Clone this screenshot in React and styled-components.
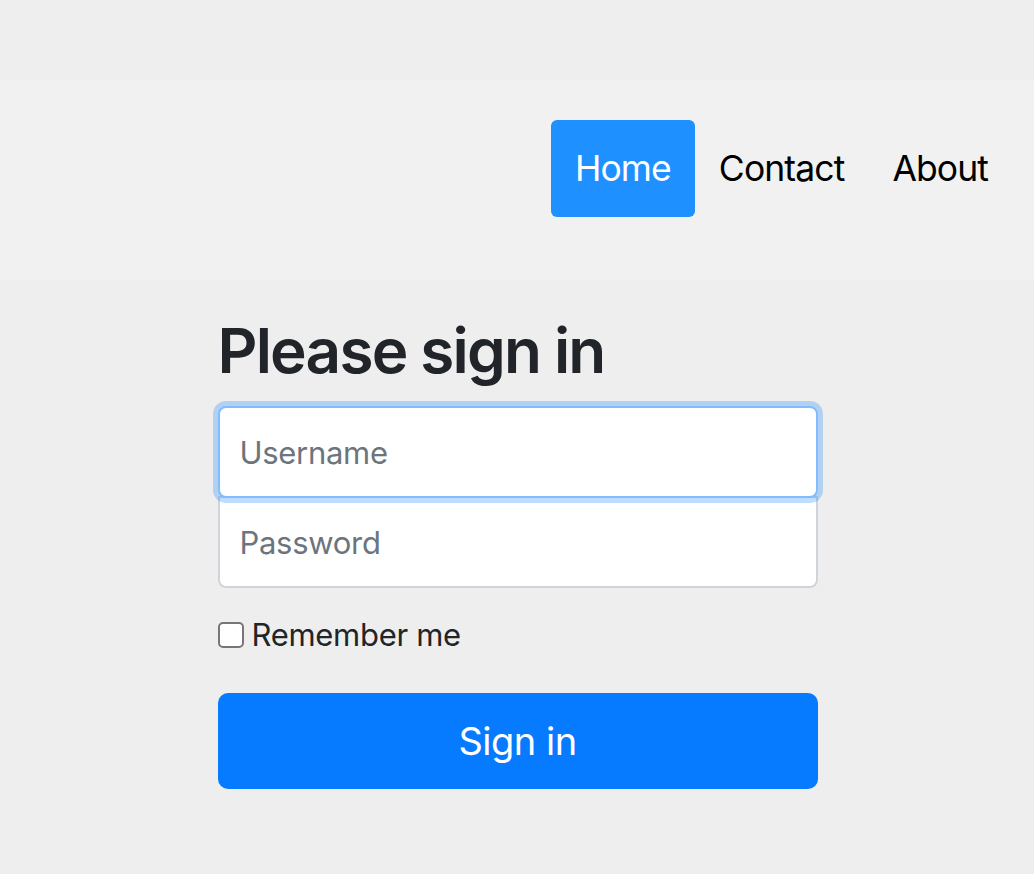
import React from 'react';
import styled, { createGlobalStyle } from 'styled-components';

const GlobalStyle = createGlobalStyle`
  html, body {
    margin: 0;
    padding: 0;
    background: #eeeeee;
    font-family: Inter, "Noto Sans", "Liberation Sans", sans-serif;
  }
`;

const Page = styled.div`
  min-height: 874px;
  padding-top: 80px;
  box-sizing: border-box;
`;

const Nav = styled.nav`
  background: #f1f1f1;
  height: 200px;
  box-sizing: border-box;
  padding: 40px 22px 0;
  display: flex;
  justify-content: flex-end;
  align-items: flex-start;
`;

const NavLink = styled.a`
  display: flex;
  align-items: center;
  height: 97px;
  padding: 0 24px;
  border-radius: 6px;
  font-size: 35.5px;
  letter-spacing: -0.9px;
  text-decoration: none;
  color: ${(p) => (p.$active ? '#ffffff' : '#000000')};
  background: ${(p) => (p.$active ? '#1e90ff' : 'transparent')};
`;

const Form = styled.form`
  width: 600px;
  margin: 0 auto;
  padding: 34px 0 0 1px;
  display: flex;
  flex-direction: column;
`;

const Heading = styled.h2`
  margin: 0 0 18px;
  font-size: 62px;
  font-weight: 600;
  letter-spacing: -1.8px;
  line-height: 1.2;
  color: #212529;
`;

const Input = styled.input`
  display: block;
  width: 100%;
  height: 92px;
  box-sizing: border-box;
  padding: 0 20px;
  font-family: inherit;
  font-size: 31px;
  letter-spacing: -0.3px;
  color: #495057;
  background: #ffffff;
  border: 2px solid ${(p) => (p.$focused ? '#80bdff' : '#ced4da')};
  border-radius: 8px;
  outline: none;
  position: relative;
  z-index: ${(p) => (p.$focused ? 2 : 1)};
  margin-top: ${(p) => (p.$first ? '0' : '-2px')};
  border-top-left-radius: ${(p) => (p.$first ? '8px' : '0')};
  border-top-right-radius: ${(p) => (p.$first ? '8px' : '0')};
  box-shadow: ${(p) => (p.$focused ? '0 0 0 5px rgba(0, 123, 255, 0.25)' : 'none')};
  caret-color: #495057;

  &::placeholder {
    color: #6c757d;
  }
`;

const CheckRow = styled.label`
  display: flex;
  align-items: center;
  gap: 8px;
  margin: 28px 0 40px;
  font-size: 31px;
  letter-spacing: -0.3px;
  color: #212529;
`;

const Check = styled.input`
  appearance: none;
  margin: 0;
  width: 26px;
  height: 26px;
  border: 2px solid #767676;
  border-radius: 5px;
  background: #ffffff;
  box-sizing: border-box;
`;

const SubmitButton = styled.button`
  width: 100%;
  height: 96px;
  border: none;
  border-radius: 10px;
  background: #077bff;
  color: #ffffff;
  font-family: inherit;
  font-size: 38px;
  letter-spacing: -0.5px;
`;

const App = () => {
  return (
    <>
      <GlobalStyle />
      <Page>
        <Nav>
          <NavLink href="#" $active>Home</NavLink>
          <NavLink href="#">Contact</NavLink>
          <NavLink href="#">About</NavLink>
        </Nav>
        <Form onSubmit={(e) => e.preventDefault()}>
          <Heading>Please sign in</Heading>
          <Input type="text" placeholder="Username" $first $focused autoFocus />
          <Input type="password" placeholder="Password" />
          <CheckRow>
            <Check type="checkbox" />
            Remember me
          </CheckRow>
          <SubmitButton type="submit">Sign in</SubmitButton>
        </Form>
      </Page>
    </>
  );
};

export default App;
